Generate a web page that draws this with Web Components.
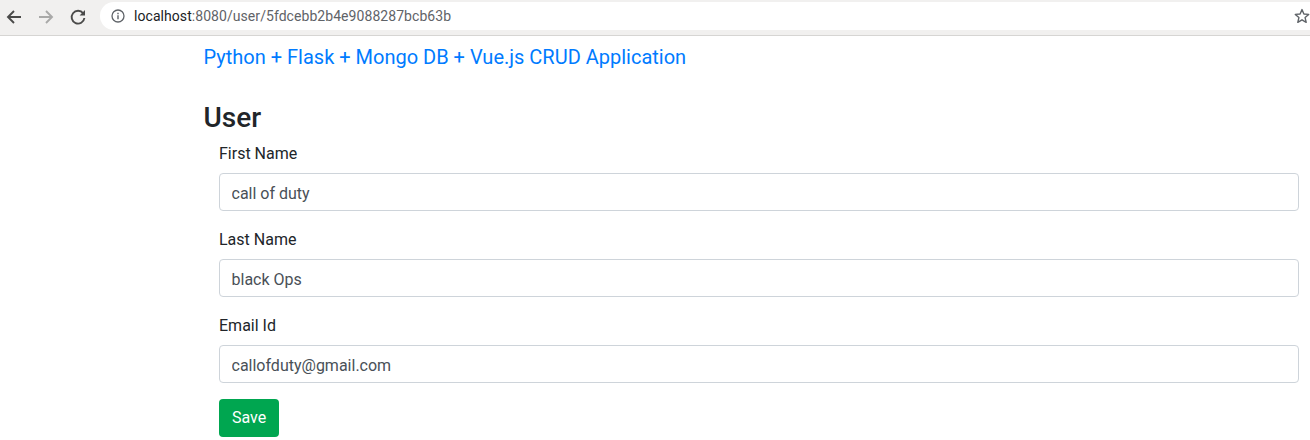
<!DOCTYPE html>
<html lang="en"><head><meta charset="utf-8"><title>User</title>
<style>
html,body{margin:0;padding:0;background:#fff;font-family:Roboto,"Liberation Sans",sans-serif;overflow:hidden}
body{display:flex;flex-direction:column;height:440px}
</style></head><body>
<browser-bar url-host="localhost" url-path=":8080/user/5fdcebb2b4e9088287bcb63b"></browser-bar>
<app-page>
  <a-brand slot="brand">Python + Flask + Mongo DB + Vue.js CRUD Application</a-brand>
  <span slot="title">User</span>
  <form-field label="First Name" value="call of duty"></form-field>
  <form-field label="Last Name" value="black Ops"></form-field>
  <form-field label="Email Id" value="callofduty@gmail.com"></form-field>
  <save-button>Save</save-button>
</app-page>
<script>
function def(name, html, setup){
  customElements.define(name, class extends HTMLElement{
    constructor(){super();this.attachShadow({mode:'open'}).innerHTML=html;}
    connectedCallback(){ if(setup) setup(this); }
  });
}
def('browser-bar',`<style>
:host{display:flex;align-items:flex-start;box-sizing:border-box;height:36px;background:#f1f0ef;border-bottom:1px solid #d6d5d3;flex:none;font-family:Roboto,sans-serif}
.nav{display:flex;align-items:center;height:34px;flex:none;padding-left:5px}
.btn{width:18px;height:18px;display:block;flex:none}
.fwd{margin-left:14px}.rel{margin-left:14px}
.omni{flex:1;margin:2px 0 0 13px;height:28px;background:#fff;border-radius:14px 0 0 14px;display:flex;align-items:center;padding-left:10px}
.info{width:16px;height:16px;flex:none}
.url{margin-left:8px;font-size:14px;letter-spacing:.06px;color:#5f6368;white-space:nowrap;flex:1}
.url b{font-weight:400;color:#202124}
.star{width:18px;height:18px;flex:none;margin-right:-1px}
</style>
<div class="nav">
<svg class="btn" viewBox="0 0 18 18"><path d="M16 9H3.5M9 3L3 9l6 6" fill="none" stroke="#4a4a49" stroke-width="1.9"/></svg>
<svg class="btn fwd" viewBox="0 0 18 18"><path d="M2 9h12.5M9 3l6 6-6 6" fill="none" stroke="#a9a9a8" stroke-width="1.9"/></svg>
<svg class="btn rel" viewBox="0 0 18 18"><path d="M14.2 5.4A6.4 6.4 0 1 0 15.4 10" fill="none" stroke="#4a4a49" stroke-width="1.9"/><path d="M10.6 7.4H16V2z" fill="#4a4a49"/></svg>
</div>
<div class="omni">
<svg class="info" viewBox="0 0 16 16"><circle cx="8" cy="8" r="6" fill="none" stroke="#5f6368" stroke-width="1.3"/><path d="M7.3 7.2h1.4v4H7.3zM7.3 4.8h1.4v1.4H7.3z" fill="#5f6368"/></svg>
<span class="url"><b id="h"></b><span id="p"></span></span>
<svg class="star" viewBox="0 0 18 18"><path d="M9 2.6l1.9 4.4 4.8.4-3.6 3.2 1.1 4.7L9 12.8l-4.2 2.5 1.1-4.7-3.6-3.2 4.8-.4z" fill="none" stroke="#5f6368" stroke-width="1.4" stroke-linejoin="round"/></svg>
</div>`, el=>{
  el.shadowRoot.getElementById('h').textContent=el.getAttribute('url-host');
  el.shadowRoot.getElementById('p').textContent=el.getAttribute('url-path');
});
def('a-brand',`<style>:host{display:block;font-size:20px;line-height:30px;color:#007bff;white-space:nowrap}</style><slot></slot>`);
def('app-page',`<style>
:host{display:block;padding:6px 0 0 203.5px;box-sizing:border-box;color:#212529;font-family:Roboto,sans-serif}
h3{margin:29px 0 6px;font-size:28px;font-weight:500;line-height:33.6px}
.form{margin-left:15.5px;width:1080px}
</style>
<slot name="brand"></slot>
<h3><slot name="title"></slot></h3>
<div class="form"><slot></slot></div>`);
def('form-field',`<style>
:host{display:block;margin-bottom:16px}
label{display:block;font-size:16px;line-height:24px;color:#212529;padding-top:1px;margin-bottom:7px}
input{display:block;box-sizing:border-box;width:100%;height:38px;padding:8px 12px 4px 11.5px;font:400 16px/24px Roboto,sans-serif;color:#495057;background:#fff;border:1px solid #ced4da;border-radius:4px;outline:0;margin:0}
</style><label id="l"></label><input id="i" type="text">`, el=>{
  el.shadowRoot.getElementById('l').textContent=el.getAttribute('label');
  el.shadowRoot.getElementById('i').setAttribute('value',el.getAttribute('value'));
});
def('save-button',`<style>
:host{display:inline-flex;align-items:center;justify-content:center;box-sizing:border-box;height:38px;padding:0 13px;background:#00a650;color:#fff;border-radius:4px;font-size:16px;line-height:24px}
</style><slot></slot>`);
</script>
</body></html>
